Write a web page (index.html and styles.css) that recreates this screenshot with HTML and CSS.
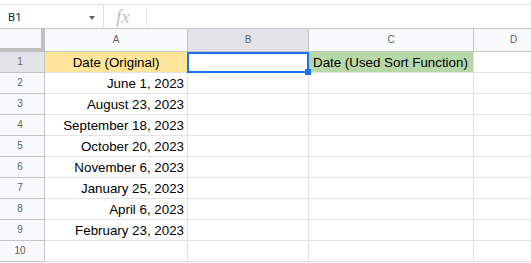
FILE: index.html
```html
<!DOCTYPE html>
<html lang="en">
<head>
    <meta charset="UTF-8">
    <title>Sheet</title>
    <link rel="stylesheet" href="styles.css">
</head>
<body>
    <div class="formula-bar">
        <div class="name-box">
            <span class="name">B1</span>
            <span class="caret"></span>
        </div>
        <div class="fx">fx</div>
        <div class="formula-input"></div>
    </div>

    <div class="sheet">
        <div class="corner"></div>
        <div class="col-head">A</div>
        <div class="col-head active">B</div>
        <div class="col-head">C</div>
        <div class="col-head">D</div>

        <div class="row-head active">1</div>
        <div class="cell yellow center">Date (Original)</div>
        <div class="cell selected"><span class="handle"></span></div>
        <div class="cell green">Date (Used Sort Function)</div>
        <div class="cell"></div>

        <div class="row-head">2</div>
        <div class="cell right">June 1, 2023</div>
        <div class="cell"></div><div class="cell"></div><div class="cell"></div>

        <div class="row-head">3</div>
        <div class="cell right">August 23, 2023</div>
        <div class="cell"></div><div class="cell"></div><div class="cell"></div>

        <div class="row-head">4</div>
        <div class="cell right">September 18, 2023</div>
        <div class="cell"></div><div class="cell"></div><div class="cell"></div>

        <div class="row-head">5</div>
        <div class="cell right">October 20, 2023</div>
        <div class="cell"></div><div class="cell"></div><div class="cell"></div>

        <div class="row-head">6</div>
        <div class="cell right">November 6, 2023</div>
        <div class="cell"></div><div class="cell"></div><div class="cell"></div>

        <div class="row-head">7</div>
        <div class="cell right">January 25, 2023</div>
        <div class="cell"></div><div class="cell"></div><div class="cell"></div>

        <div class="row-head">8</div>
        <div class="cell right">April 6, 2023</div>
        <div class="cell"></div><div class="cell"></div><div class="cell"></div>

        <div class="row-head">9</div>
        <div class="cell right">February 23, 2023</div>
        <div class="cell"></div><div class="cell"></div><div class="cell"></div>

        <div class="row-head">10</div>
        <div class="cell"></div>
        <div class="cell"></div><div class="cell"></div><div class="cell"></div>
    </div>
</body>
</html>
```

FILE: styles.css
```css
body {
    margin: 0;
    background: #ffffff;
    font-family: 'Liberation Sans', Arial, sans-serif;
    overflow: hidden;
}
.formula-bar {
    box-sizing: border-box;
    margin-top: 4px;
    height: 25px;
    display: flex;
    align-items: center;
    border-top: 1px solid #e3e3e3;
    border-bottom: 1px solid #c4c7c5;
}
.name-box {
    box-sizing: border-box;
    width: 104px;
    height: 100%;
    display: flex;
    align-items: center;
    justify-content: space-between;
    padding: 0 8px 0 8px;
    border-right: 1px solid #e3e3e3;
}
.name {
    font-family: Roboto, 'Liberation Sans', sans-serif;
    font-size: 11.5px;
    color: #1f1f1f;
}
.caret {
    width: 0;
    height: 0;
    margin-top: 2px;
    border-left: 3.5px solid transparent;
    border-right: 3.5px solid transparent;
    border-top: 4px solid #5f6368;
}
.fx {
    box-sizing: border-box;
    width: 43px;
    height: 18px;
    padding-left: 12px;
    font-family: 'Liberation Serif', serif;
    font-style: italic;
    font-size: 19px;
    line-height: 17px;
    color: #c0c0c0;
    border-right: 1px solid #e3e3e3;
}
.formula-input {
    flex: 1;
}
.sheet {
    display: grid;
    grid-template-columns: 45px 143px 121px 165px 80px;
    grid-auto-rows: 21px;
    grid-template-rows: 23px;
}
.corner {
    box-sizing: border-box;
    background: #f8f9fa;
    border-right: 4px solid #c0c0c0;
    border-bottom: 4px solid #c0c0c0;
    width: 45px;
}
.col-head {
    box-sizing: border-box;
    background: #f8f9fa;
    border-right: 1px solid #c4c7c5;
    border-bottom: 1px solid #c4c7c5;
    font-size: 10px;
    color: #5f6368;
    text-align: center;
    line-height: 22px;
}
.row-head {
    box-sizing: border-box;
    background: #f8f9fa;
    border-right: 1px solid #c4c7c5;
    border-bottom: 1px solid #c4c7c5;
    font-size: 10px;
    color: #5f6368;
    text-align: center;
    line-height: 20px;
    padding-right: 4px;
}
.col-head.active, .row-head.active {
    background: #e1e3e6;
}
.cell {
    box-sizing: border-box;
    border-right: 1px solid #e2e3e3;
    border-bottom: 1px solid #e2e3e3;
    padding: 0 3px;
    font-size: 13.33px;
    line-height: 21px;
    color: #000000;
    white-space: nowrap;
    overflow: visible;
}
.right { text-align: right; }
.center { text-align: center; }
.yellow { background: #ffe599; }
.green {
    background: #b6d7a8;
    padding-left: 4px;
}
.selected {
    position: relative;
}
.selected::after {
    content: "";
    position: absolute;
    top: 0;
    left: -1px;
    right: -1px;
    bottom: -1px;
    border: 2px solid #1a73e8;
}
.handle {
    position: absolute;
    right: -3px;
    bottom: -3px;
    width: 6px;
    height: 6px;
    background: #1a73e8;
    z-index: 2;
}
```
